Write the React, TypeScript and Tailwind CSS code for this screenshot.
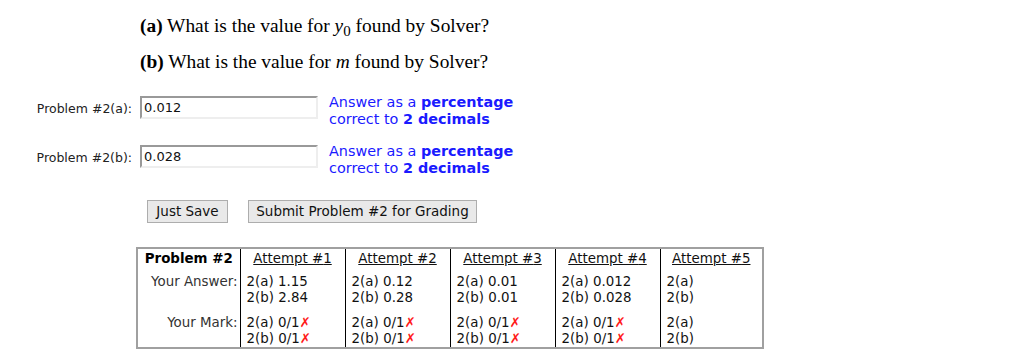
import React from 'react';

const verdana = "font-['DejaVu_Sans',Verdana,sans-serif]";

function X() {
  return <span className="text-[#ff1a1a]">✗</span>;
}

const attempts = [
  { a: '1.15', b: '2.84', marked: true },
  { a: '0.12', b: '0.28', marked: true },
  { a: '0.01', b: '0.01', marked: true },
  { a: '0.012', b: '0.028', marked: true },
  { a: '', b: '', marked: false },
];

function AnswerRow({ label, value }: { label: string; value: string }) {
  return (
    <div className="flex items-start">
      <div className="w-[133px] pt-[4px] pr-[1px] text-right text-[12.5px] text-[#222]">{label}</div>
      <input
        readOnly
        value={value}
        className={`ml-[7px] h-[23px] w-[178px] border-2 border-t-[#999] border-l-[#999] border-b-[#eee] border-r-[#eee] bg-white pl-[2px] text-[13px] text-[#111] outline-none ${verdana}`}
      />
      <div className="ml-[11px] -mt-[2px] text-[14.4px] leading-[17px] text-[#1a1aff]">
        <div>
          Answer as a <b>percentage</b>
        </div>
        <div>
          correct to <b>2 decimals</b>
        </div>
      </div>
    </div>
  );
}

export default function App() {
  return (
    <div className={`relative h-[364px] w-[1024px] overflow-hidden bg-white ${verdana}`}>
      <div className="pl-[140px] pt-[16px] font-['Liberation_Serif',serif] text-[19.4px] leading-[20px] text-black">
        <p>
          <b>(a)</b> What is the value for <i>y</i>
          <sub className="text-[15px]">0</sub> found by Solver?
        </p>
        <p className="mt-[16px]">
          <b>(b)</b> What is the value for <i>m</i> found by Solver?
        </p>
      </div>

      <div className="mt-[24px] flex flex-col gap-[17px]">
        <AnswerRow label="Problem #2(a):" value="0.012" />
        <AnswerRow label="Problem #2(b):" value="0.028" />
      </div>

      <div className="ml-[147px] mt-[23px] flex gap-[20px] text-[13.5px] text-[#111]">
        <button className="h-[23px] w-[81px] border border-[#adadad] bg-[#e9e9e9]">Just Save</button>
        <button className="h-[23px] w-[229px] border border-[#adadad] bg-[#e9e9e9]">
          Submit Problem #2 for Grading
        </button>
      </div>

      <table className="ml-[136px] mt-[24px] w-[628px] table-fixed border-collapse border-2 border-[#a0a0a0] text-[13.4px] leading-[16px] text-[#111]">
        <colgroup>
          <col className="w-[103px]" />
          <col className="w-[105px]" />
          <col className="w-[105px]" />
          <col className="w-[105px]" />
          <col className="w-[105px]" />
          <col />
        </colgroup>
        <tbody>
          <tr>
            <td className="border-r border-black pt-[2px] pb-[3px] text-center font-bold text-[#000]">Problem #2</td>
            {attempts.map((_, i) => (
              <td key={i} className="border-r border-black pt-[2px] pb-[3px] text-center underline">
                Attempt #{i + 1}
              </td>
            ))}
          </tr>
          <tr>
            <td className="border-r border-black pr-[2px] pt-[4px] align-top text-right text-[#333]">Your Answer:</td>
            {attempts.map((t, i) => (
              <td key={i} className="border-r border-black pl-[6px] pt-[4px] align-top">
                <div>2(a) {t.a}</div>
                <div>2(b) {t.b}</div>
              </td>
            ))}
          </tr>
          <tr>
            <td className="border-r border-black pr-[2px] pt-[9px] pb-0 align-top text-right text-[#333]">Your Mark:</td>
            {attempts.map((t, i) => (
              <td key={i} className="border-r border-black pl-[6px] pt-[9px] pb-0 align-top">
                <div>
                  2(a){t.marked ? ' 0/1' : ''}
                  {t.marked && <X />}
                </div>
                <div>
                  2(b){t.marked ? ' 0/1' : ''}
                  {t.marked && <X />}
                </div>
              </td>
            ))}
          </tr>
        </tbody>
      </table>
    </div>
  );
}
